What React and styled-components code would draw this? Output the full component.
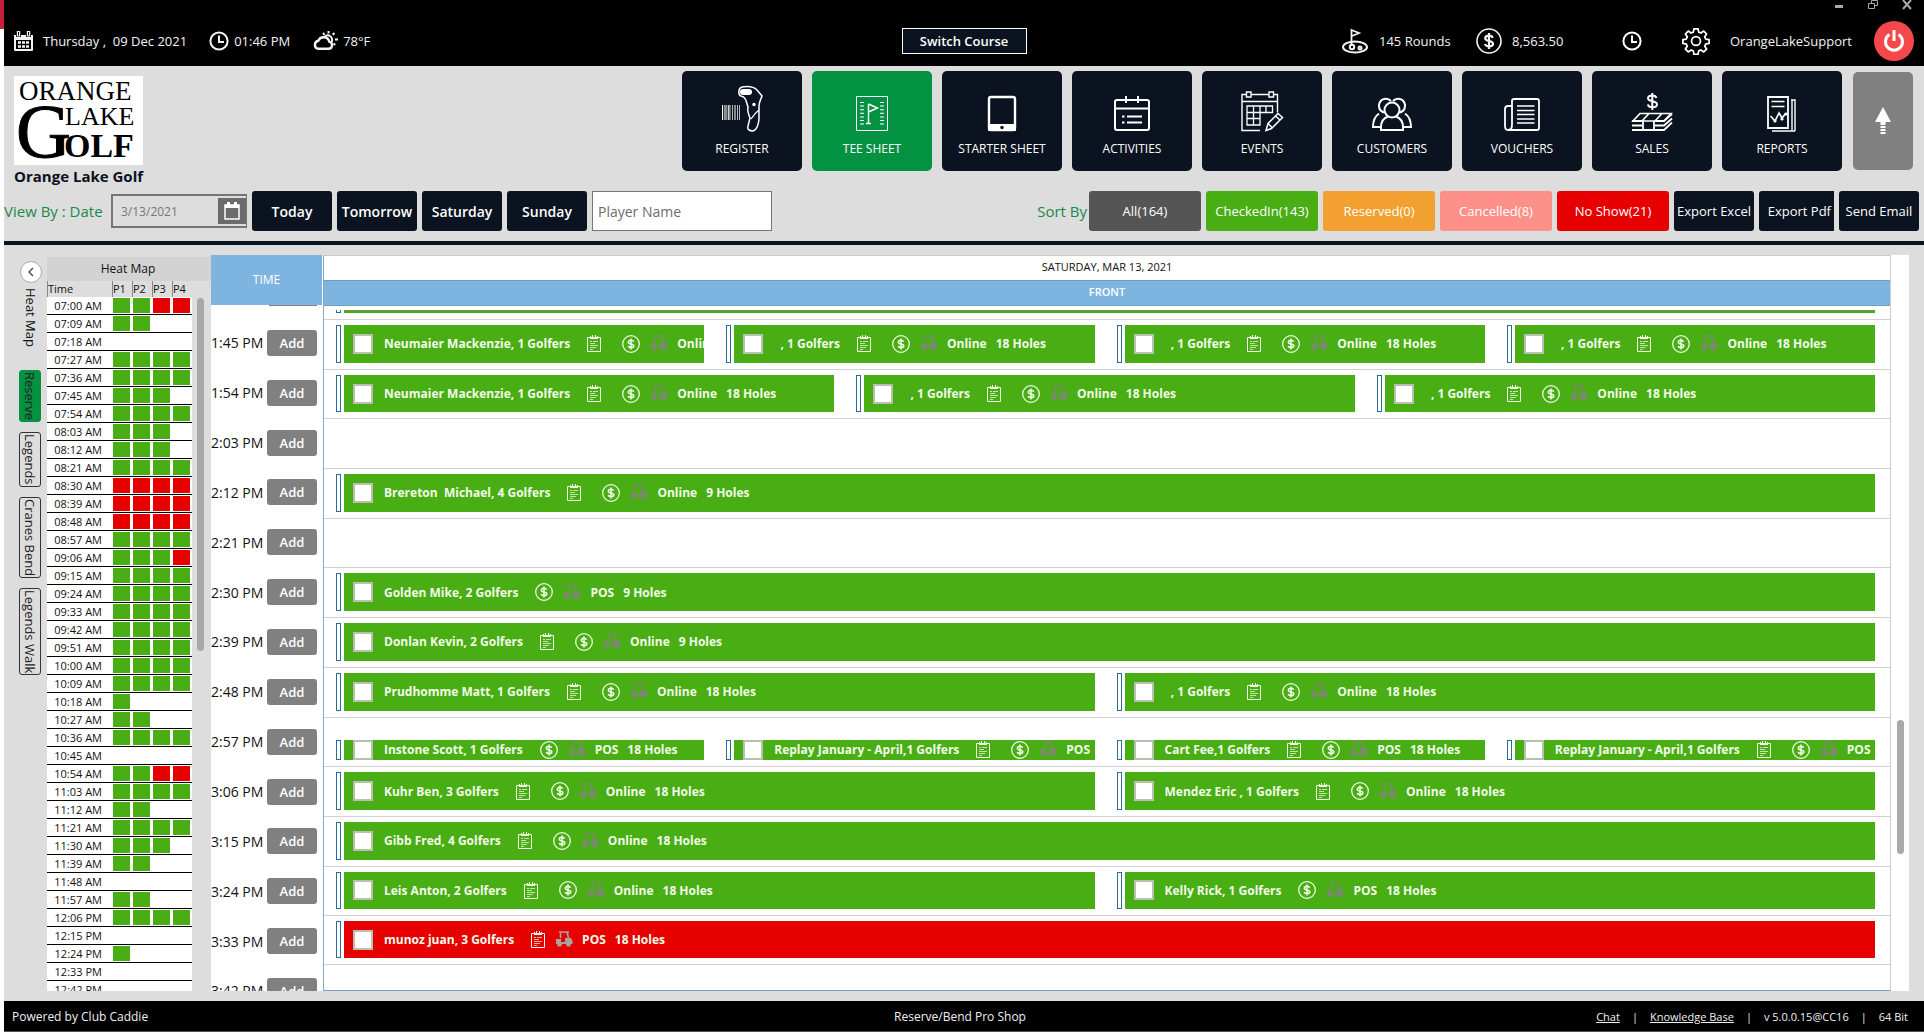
import { useState } from 'react';
import styled, { createGlobalStyle } from 'styled-components';

const GREEN = '#48ae14';
const RED = '#e60000';
const NAVY = '#0b1220';

const stats = [
    { label: 'All(164)', color: '#555555' },
    { label: 'CheckedIn(143)', color: GREEN },
    { label: 'Reserved(0)', color: '#f2a02f' },
    { label: 'Cancelled(8)', color: '#fd9089' },
    { label: 'No Show(21)', color: RED },
];

const courses = ['Reserve', 'Legends', 'Cranes Bend', 'Legends Walk'];

// one letter for each player slot: g = checked in, r = no show
const heat = [
    ['07:00 AM', 'ggrr'], ['07:09 AM', 'gg'], ['07:18 AM', ''], ['07:27 AM', 'gggg'],
    ['07:36 AM', 'gggg'], ['07:45 AM', 'ggg'], ['07:54 AM', 'gggg'], ['08:03 AM', 'ggg'],
    ['08:12 AM', 'ggg'], ['08:21 AM', 'gggg'], ['08:30 AM', 'rrrr'], ['08:39 AM', 'rrrr'],
    ['08:48 AM', 'rrrr'], ['08:57 AM', 'gggg'], ['09:06 AM', 'gggr'], ['09:15 AM', 'gggg'],
    ['09:24 AM', 'gggg'], ['09:33 AM', 'gggg'], ['09:42 AM', 'gggg'], ['09:51 AM', 'gggg'],
    ['10:00 AM', 'gggg'], ['10:09 AM', 'gggg'], ['10:18 AM', 'g'], ['10:27 AM', 'gg'],
    ['10:36 AM', 'gggg'], ['10:45 AM', ''], ['10:54 AM', 'ggrr'], ['11:03 AM', 'gggg'],
    ['11:12 AM', 'gg'], ['11:21 AM', 'gggg'], ['11:30 AM', 'ggg'], ['11:39 AM', 'gg'],
    ['11:48 AM', ''], ['11:57 AM', 'gg'], ['12:06 PM', 'gggg'], ['12:15 PM', ''],
    ['12:24 PM', 'g'], ['12:33 PM', ''], ['12:42 PM', ''],
];

const booking = (name, via, holes, icons = 'nd', color = GREEN) => ({ name, via, holes, icons, color });

const teeTimes = [
    { time: '1:45 PM', list: [
        booking('Neumaier Mackenzie, 1 Golfers', 'Online', 18),
        booking('  , 1 Golfers', 'Online', 18),
        booking('  , 1 Golfers', 'Online', 18),
        booking('  , 1 Golfers', 'Online', 18),
    ] },
    { time: '1:54 PM', list: [
        booking('Neumaier Mackenzie, 1 Golfers', 'Online', 18),
        booking('  , 1 Golfers', 'Online', 18),
        booking('  , 1 Golfers', 'Online', 18),
    ] },
    { time: '2:03 PM', list: [] },
    { time: '2:12 PM', list: [booking('Brereton  Michael, 4 Golfers', 'Online', 9)] },
    { time: '2:21 PM', list: [] },
    { time: '2:30 PM', list: [booking('Golden Mike, 2 Golfers', 'POS', 9, 'd')] },
    { time: '2:39 PM', list: [booking('Donlan Kevin, 2 Golfers', 'Online', 9)] },
    { time: '2:48 PM', list: [
        booking('Prudhomme Matt, 1 Golfers', 'Online', 18),
        booking('  , 1 Golfers', 'Online', 18),
    ] },
    { time: '2:57 PM', short: true, list: [
        booking('Instone Scott, 1 Golfers', 'POS', 18, 'd'),
        booking('Replay January - April,1 Golfers', 'POS', 18),
        booking('Cart Fee,1 Golfers', 'POS', 18),
        booking('Replay January - April,1 Golfers', 'POS', 18),
    ] },
    { time: '3:06 PM', list: [
        booking('Kuhr Ben, 3 Golfers', 'Online', 18),
        booking('Mendez Eric , 1 Golfers', 'Online', 18),
    ] },
    { time: '3:15 PM', list: [booking('Gibb Fred, 4 Golfers', 'Online', 18)] },
    { time: '3:24 PM', list: [
        booking('Leis Anton, 2 Golfers', 'Online', 18),
        booking('Kelly Rick, 1 Golfers', 'POS', 18, 'd'),
    ] },
    { time: '3:33 PM', list: [booking('munoz juan, 3 Golfers', 'POS', 18, 'n', RED)] },
];

/* ---------- icons ---------- */

const Line = styled.svg`
    display: block;
    flex: none;
    fill: none;
    stroke: currentColor;
    stroke-width: ${(p) => p.$w || 2};
`

const CalendarIcon = () => (
    <Line width="19" height="20" viewBox="0 0 19 20">
        <path d="M0 4h19v15q0 1-1 1H1q-1 0-1-1z" fill="currentColor" stroke="none" />
        <path d="M2 9h15v9H2z" fill="#000" stroke="none" />
        <path d="M4.500 0v6M14.500 0v6" stroke="#000" strokeWidth="5" />
        <path d="M4.500 0v5.500M14.500 0v5.500" strokeWidth="3.400" />
        <path d="M4.500 1v3.500M14.500 1v3.500" stroke="#000" strokeWidth="1" />
        <path d="M4 11.500h3M8 11.500h3M12 11.500h3M4 15.500h3M8 15.500h3M12 15.500h3" strokeWidth="2.500" />
    </Line>
)

const ClockIcon = () => (
    <Line width="20" height="20" viewBox="0 0 20 20">
        <circle cx="10" cy="10" r="8.600" />
        <path d="M10 4.500V11h5" />
    </Line>
)

const WeatherIcon = () => (
    <Line width="26" height="20" viewBox="0 0 26 20">
        <path d="M6 17.800h10.500a3.600 3.600 0 0 0 .8-7.100 5.800 5.800 0 0 0-11-.9 4.100 4.100 0 0 0-.3 8z" strokeWidth="2.400" />
        <path d="M12 6.500a4.300 4.300 0 1 1 7.500 4.500" />
        <path d="M16.500 0v2.500M11 2l1.500 1.800M22.500 2l-1.800 1.800M23 8.500h3M21.500 12.500l1.700 1.500" strokeWidth="2" />
    </Line>
)

const HoleIcon = () => (
    <Line width="26" height="26" viewBox="0 0 26 26">
        <ellipse cx="13" cy="19" rx="12" ry="5.500" />
        <path d="M9.500 18V2l7.500 3-7 3" strokeWidth="1.800" />
        <circle cx="10" cy="19" r="2.200" />
        <circle cx="18" cy="20" r="1.500" />
    </Line>
)

const DollarIcon = ({ size }) => (
    <Line width={size} height={size} viewBox="0 0 26 26">
        <circle cx="13" cy="13" r="12" strokeWidth={size < 20 ? 1.800 : 1.600} />
        <path d="M16.800 9.800c-.5-1.500-2-2.200-3.800-2.200-2.200 0-3.800 1-3.800 2.700 0 3.800 7.800 1.600 7.800 5.400 0 1.700-1.700 2.700-4 2.700-2 0-3.500-.9-4-2.400M13 5v16" strokeWidth="2.200" />
    </Line>
)

const GearIcon = () => (
    <Line width="28" height="28" viewBox="0 0 24 24" $w="1.500">
        <circle cx="12" cy="12" r="3.800" />
        <path d="M10.200 1.500h3.600l.5 2.900 1.900.8 2.400-1.700 2.500 2.500-1.600 2.400.8 1.900 2.900.5v3.300l-2.900.5-.8 1.900 1.600 2.400-2.500 2.500-2.400-1.700-1.900.8-.5 2.900h-3.600l-.5-2.900-1.900-.8-2.400 1.700-2.500-2.500 1.600-2.400-.8-1.900-2.900-.5v-3.300l2.900-.5.800-1.900-1.600-2.400 2.500-2.500 2.400 1.700 1.900-.8z" strokeLinejoin="round" />
    </Line>
)

const PowerIcon = () => (
    <Line width="22" height="24" viewBox="0 0 22 24" $w="3">
        <path d="M6.500 5.500a8.500 8.500 0 1 0 9 0M11 1v11" />
    </Line>
)

const NoteIcon = () => (
    <Line width="14" height="17" viewBox="0 0 14 17" $w="1">
        <path d="M.5 2.500h13v14H.5z" />
        <path d="M3.500 1v3M5.500 0v3M8.500 0v3M10.500 1v3M3 3.500h8" />
        <path d="M3 6.500h2M6 6.500h5M3 8.500h5M3 10.500h8M3 12.500h6M3 14.500h3" opacity=".7" />
    </Line>
)

const CartIcon = ({ color }) => (
    <Line width="18" height="17" viewBox="0 0 18 17" color={color} $w="1.600">
        <path d="M4 1h10M5.500 1v6M12 1l1.500 6" />
        <path d="M1 8h5v3h4V7h6l1.500 3v3H1z" fill="currentColor" stroke="none" />
        <circle cx="4.500" cy="13.500" r="2.300" fill="currentColor" stroke="none" />
        <circle cx="13.500" cy="13.500" r="2.300" fill="currentColor" stroke="none" />
    </Line>
)

const navIcons = {
    register: (
        <>
            <path d="M4.500 20v15M8 20v15M17 20v15" strokeWidth="1" />
            <path d="M6.300 20v15M12 20v15M14.500 20v15M19.500 20v15M21.500 20v15" strokeWidth="1" opacity=".7" />
            <path d="M10.500 20v15" strokeWidth="1.600" opacity=".8" />
            <path d="M23 11c-3-1-3-8 1-9 6-1 12 0 15 3l5 6c-1 3-3 6-3 10v12c0 5-2 12-6 13-4 0-6-2-5-5l2-8c-1-4-3-5-2-11-2-6-2-10-7-11z" strokeWidth="1.500" />
            <path d="M41 25c-4 3-6 6-8 9" strokeWidth="1.300" />
            <rect x="22" y="4" width="12" height="6" rx="3" fill="currentColor" stroke="none" />
            <circle cx="36" cy="19.500" r="1.700" fill="currentColor" stroke="none" />
        </>
    ),
    tee: (
        <>
            <path d="M8.500 11.500h31v34h-31z" strokeWidth="1" />
            <path d="M14 17v24M34 17v24" strokeWidth="4" strokeDasharray="1 2.600" />
            <path d="M20.500 38V19M18 38.500h5M20.500 19l9 4-9 4" strokeWidth="1.400" />
        </>
    ),
    tablet: (
        <>
            <rect x="11" y="12" width="26" height="33" rx="2" strokeWidth="2.400" />
            <path d="M11 40h26v5H11z" fill="currentColor" />
            <circle cx="24" cy="42.500" r="1.700" fill={NAVY} stroke="none" />
        </>
    ),
    activities: (
        <>
            <rect x="7" y="15" width="34" height="30" rx="2" />
            <path d="M7 23.500h34" />
            <path d="M18 11v7M30 11v7" />
            <path d="M14 31.500h2.500M14 37.500h2.500M19 31.500h15M19 37.500h15" />
        </>
    ),
    events: (
        <>
            <path d="M8 9.500H4v36h18M13 9.500h18M36 9.500h3.500v18M4 16.500h35.500" strokeWidth="1.400" />
            <path d="M8.500 7h4.500v5H8.500zM31 7h4.500v5H31z" strokeWidth="1.400" />
            <path d="M9 21h25.500v6.500H22V40H9zM9 27.500h13M9 33.500h13M15.500 21v19M22 21v6.500M28 21v6.500" strokeWidth="1.300" />
            <path d="M28 45.500l2-7 10-10 4.500 4-11 11zM30 38.500l4 4M37.500 31l4.500 4" strokeWidth="1.500" />
        </>
    ),
    customers: (
        <>
            <circle cx="24" cy="25" r="7.500" />
            <path d="M16 27.500a7 7 0 1 1 7-11.500M32 27.500a7 7 0 1 0-7-11.500" />
            <path d="M13 45v-3c0-5 3-9 7-10.500M35 45v-3c0-5-3-9-7-10.500M12 45h24" />
            <path d="M13 42H5c0-6 1-10 6-13.500M35 42h8c0-6-1-10-6-13.500" />
        </>
    ),
    vouchers: (
        <>
            <path d="M14 40V16q0-2 2-2h23q2 0 2 2v27q0 2-2 2H10q-3 0-3-4V24q0-3 3-3h4M14 40q0 5-4 5" strokeWidth="1.800" />
            <path d="M19 21h17.500M19 25.500h17.500M19 29.500h17.500M19 34h17.500M19 38h17.500" strokeWidth="1.400" />
        </>
    ),
    sales: (
        <>
            <path d="M28.500 13c-.5-2-2.200-2.600-4.300-2.600-2.600 0-4.200 1-4.200 2.900 0 4 9 2 9 6 0 1.900-1.900 3-4.500 3-2.400 0-4.200-1-4.700-2.800M24.300 8v17" />
            <path d="M5 36l7-7.500h31L36 36zM14 36l7-7.500M27 36l7-7.500" strokeWidth="1.700" />
            <path d="M4 36h11M26 36h10l8-7M4 40.500h10M27 40.500h9l8-7M4 45h32l8-7.500M15 36v8.500M26 36v8.500" strokeWidth="1.800" />
        </>
    ),
    reports: (
        <>
            <path d="M10 12h20v31H10z" strokeWidth="1.800" />
            <path d="M33 15h4v31M14 46h23M34 15v30" strokeWidth="1.400" />
            <path d="M13.500 16.500h13M13.500 21.500h13" strokeWidth="1.600" />
            <path d="M12.500 31l4.500 5 4-8 3 5 4-5" strokeWidth="1.600" />
            <circle cx="17" cy="36" r="1.600" fill="currentColor" stroke="none" />
            <circle cx="24" cy="34" r="1.600" fill="currentColor" stroke="none" />
            <circle cx="28" cy="29" r="1.600" fill="currentColor" stroke="none" />
        </>
    ),
};

const navItems = [
    ['REGISTER', 'register'],
    ['TEE SHEET', 'tee'],
    ['STARTER SHEET', 'tablet'],
    ['ACTIVITIES', 'activities'],
    ['EVENTS', 'events'],
    ['CUSTOMERS', 'customers'],
    ['VOUCHERS', 'vouchers'],
    ['SALES', 'sales'],
    ['REPORTS', 'reports'],
];

function Logo() {
    return (
        <LogoBox viewBox="0 0 129 89" fontFamily="'Liberation Serif', serif" role="img" aria-label="Orange Lake Golf">
            <text x="5" y="24" fontSize="27">ORANGE</text>
            <text x="51" y="49" fontSize="26">LAKE</text>
            <text x="2" y="81" fontSize="76" stroke="#000" strokeWidth="1">G</text>
            <text x="50" y="81" fontSize="34" fontWeight="bold">OLF</text>
        </LogoBox>
    )
}

function TopBar() {
    return (
        <Top>
            <WindowRow>
                <WinButton aria-label="Minimize"><Line width="10" height="10" viewBox="0 0 10 10" $w="3"><path d="M1 6.500h8" /></Line></WinButton>
                <WinButton aria-label="Restore"><Line width="10" height="10" viewBox="0 0 10 10" $w="1"><path d="M.5 3.500h6v5h-6zM3.500 3V.5h6v5H7" /></Line></WinButton>
                <WinButton aria-label="Close"><Line width="10" height="10" viewBox="0 0 10 10" $w="2"><path d="M1 0l8 9M9 0L1 9" /></Line></WinButton>
            </WindowRow>
            <StatusRow>
                <StatusLeft>
                    <Status $gap={10}><CalendarIcon />{'Thursday ,  09 Dec 2021'}</Status>
                    <Status $gap={5}><ClockIcon />01:46 PM</Status>
                    <Status $gap={5}><WeatherIcon />78°F</Status>
                </StatusLeft>
                <SwitchButton>Switch Course</SwitchButton>
                <StatusRight>
                    <Status $gap={11} $width={134}><HoleIcon />145 Rounds</Status>
                    <Status $gap={10} $width={126}><DollarIcon size={26} />8,563.50</Status>
                    <IconButton $width={60} aria-label="Clock in"><ClockIcon /></IconButton>
                    <IconButton $width={68} aria-label="Settings"><GearIcon /></IconButton>
                    <Status $width={144}>OrangeLakeSupport</Status>
                    <PowerButton aria-label="Log out"><PowerIcon /></PowerButton>
                </StatusRight>
            </StatusRow>
        </Top>
    )
}

function Toolbar() {
    const [player, setPlayer] = useState('');
    return (
        <Tools>
            <ToolLabel htmlFor="view-date">View By : Date</ToolLabel>
            <DateBox>
                <DateInput id="view-date" defaultValue="3/13/2021" />
                <DateButton aria-label="Open calendar">
                    <Line width="16" height="18" viewBox="0 0 16 18" $w="1.500">
                        <path d="M1 3h14v14H1z" />
                        <path d="M1 4.500h14" strokeWidth="3" />
                        <path d="M4.500 0v4M11.500 0v4" strokeWidth="3" />
                    </Line>
                </DateButton>
            </DateBox>
            <DayButton>Today</DayButton>
            <DayButton>Tomorrow</DayButton>
            <DayButton>Saturday</DayButton>
            <DayButton>Sunday</DayButton>
            <PlayerInput
                aria-label="Player Name"
                placeholder="Player Name"
                value={player}
                onChange={(e) => setPlayer(e.target.value)}
            />
            <Spacer />
            <SortLabel>Sort By</SortLabel>
            {stats.map((s) => <StatButton key={s.label} $color={s.color}>{s.label}</StatButton>)}
            <ExportButton>Export Excel</ExportButton>
            <ExportButton $cut>Export Pdf</ExportButton>
            <ExportButton>Send Email</ExportButton>
        </Tools>
    )
}

function HeatMap() {
    return (
        <HeatPanel>
            <HeatTitle>Heat Map</HeatTitle>
            <HeatBody>
                <HeatTable>
                    <thead>
                        <tr>
                            <HeatHead $width={65}>Time</HeatHead>
                            {['P1', 'P2', 'P3', 'P4'].map((p) => <HeatHead key={p} $width={20}>{p}</HeatHead>)}
                        </tr>
                    </thead>
                    <tbody>
                        {heat.map(([time, slots]) => (
                            <tr key={time}>
                                <HeatTime>{time}</HeatTime>
                                {[0, 1, 2, 3].map((i) => (
                                    <HeatCell key={i}><Square $kind={slots[i]} /></HeatCell>
                                ))}
                            </tr>
                        ))}
                    </tbody>
                </HeatTable>
                <HeatTrack><Thumb /></HeatTrack>
            </HeatBody>
        </HeatPanel>
    )
}

function Booking({ item }) {
    return (
        <Slot>
            <Handle />
            <Bar $color={item.color}>
                <Check type="checkbox" aria-label={item.name.trim()} />
                <BarName>{item.name}</BarName>
                {item.icons.includes('n') && <NoteIcon />}
                {item.icons.includes('d') && <DollarWrap $after={item.icons.includes('n')}><DollarIcon size={18} /></DollarWrap>}
                <CartWrap><CartIcon color={item.color === RED ? '#a9a39f' : '#798b68'} /></CartWrap>
                <BarText>{item.via}</BarText>
                <BarText>{item.holes} Holes</BarText>
            </Bar>
        </Slot>
    )
}

function TeeSheet() {
    return (
        <Sheet>
            <TimeColumn>
                <TimeHead>TIME</TimeHead>
                <Rows>
                    <TimeRow><AddEdge /></TimeRow>
                    {teeTimes.map((t) => (
                        <TimeRow key={t.time}>
                            <TimeText>{t.time}</TimeText>
                            <AddButton>Add</AddButton>
                        </TimeRow>
                    ))}
                    <LastTimeRow>
                        <TimeText>3:42 PM</TimeText>
                        <AddButton>Add</AddButton>
                    </LastTimeRow>
                </Rows>
            </TimeColumn>
            <Course>
                <DayHead>SATURDAY, MAR 13, 2021</DayHead>
                <FrontHead>FRONT</FrontHead>
                <Rows>
                    <CutRow>
                        <Handle $cut />
                        <CutBar />
                    </CutRow>
                    {teeTimes.map((t) => (
                        <SlotRow key={t.time} $count={t.list.length} $short={t.short}>
                            {t.list.map((b, i) => <Booking key={i} item={b} />)}
                        </SlotRow>
                    ))}
                    <div />
                </Rows>
            </Course>
            <SheetTrack><Thumb /></SheetTrack>
        </Sheet>
    )
}

function App() {
    const [active, setActive] = useState('TEE SHEET');
    const [course, setCourse] = useState('Reserve');

    return (
        <Screen>
            <GlobalStyle />
            <Behind />
            <Window>
                <TopBar />
                <Header>
                    <Brand>
                        <Logo />
                        <BrandName>Orange Lake Golf</BrandName>
                    </Brand>
                    <Nav>
                        {navItems.map(([label, icon]) => (
                            <NavButton key={label} $active={label === active} onClick={() => setActive(label)}>
                                <Line width="48" height="48" viewBox="0 0 48 48">{navIcons[icon]}</Line>
                                <span>{label}</span>
                            </NavButton>
                        ))}
                        <UpButton aria-label="Collapse header">
                            <Line width="16" height="28" viewBox="0 0 16 28">
                                <path d="M8 0l8 15H0z" fill="currentColor" stroke="none" />
                                <path d="M8 14v14" strokeWidth="5" strokeDasharray="4 1 2 1 2 1 2 1" />
                            </Line>
                        </UpButton>
                    </Nav>
                </Header>
                <Toolbar />
                <Main>
                    <Rail>
                        <BackButton aria-label="Hide heat map">
                            <Line width="8" height="10" viewBox="0 0 8 10" $w="1.500"><path d="M6 1L2 5l4 4" /></Line>
                        </BackButton>
                        <RailTitle>Heat Map</RailTitle>
                        {courses.map((c) => (
                            <CourseButton key={c} $active={c === course} onClick={() => setCourse(c)}>{c}</CourseButton>
                        ))}
                    </Rail>
                    <HeatMap />
                    <TeeSheet />
                </Main>
                <Footer>
                    <span>Powered by Club Caddie</span>
                    <span>Reserve/Bend Pro Shop</span>
                    <FootLinks>
                        <FootLink href="#chat">Chat</FootLink>
                        <span>|</span>
                        <FootLink href="#kb">Knowledge Base</FootLink>
                        <span>|</span>
                        <span>v 5.0.0.15@CC16</span>
                        <span>|</span>
                        <span>64 Bit</span>
                    </FootLinks>
                </Footer>
            </Window>
        </Screen>
    )
}

/* ---------- styles ---------- */

const GlobalStyle = createGlobalStyle`
    * {
        box-sizing: border-box;
    }
    body {
        margin: 0;
        overflow: hidden;
        font-family: 'Open Sans', 'Noto Sans', sans-serif;
        font-size: 13px;
        color: #111;
    }
    button, input {
        font-family: inherit;
        margin: 0;
        padding: 0;
        border: none;
    }
`
const Screen = styled.div`
    display: flex;
    height: 100vh;
`
const Behind = styled.div`
    width: 4px;
    flex: none;
    background: linear-gradient(#c3203a 29px, #fff 29px);
`
const Window = styled.div`
    flex: 1;
    min-width: 0;
    display: flex;
    flex-direction: column;
    background: #dcdddc;
    border-bottom: 1px solid #555;
`
const Top = styled.header`
    flex: none;
    background: #000;
    color: #f4f4f4;
`
const WindowRow = styled.div`
    display: flex;
    justify-content: flex-end;
    gap: 24px;
    height: 18px;
    padding-right: 12px;
`
const WinButton = styled.button`
    display: flex;
    height: 10px;
    background: none;
    color: #aaa;
`
const StatusRow = styled.div`
    display: grid;
    grid-template-columns: 1fr auto 1fr;
    align-items: center;
    height: 48px;
    padding: 0 10px 2px;
`
const StatusLeft = styled.div`
    display: flex;
    gap: 22px;
`
const StatusRight = styled.div`
    display: flex;
    align-items: center;
    justify-content: flex-end;
`
const Status = styled.div`
    display: flex;
    align-items: center;
    gap: ${(p) => p.$gap || 0}px;
    width: ${(p) => (p.$width ? p.$width + 'px' : 'auto')};
    font-size: 13px;
    white-space: pre;
`
const SwitchButton = styled.button`
    width: 125px;
    height: 26px;
    border: 1px solid #fff;
    background: ${NAVY};
    color: #fff;
    font-size: 13px;
    font-weight: 600;
`
const IconButton = styled.button`
    display: flex;
    justify-content: center;
    align-items: center;
    width: ${(p) => p.$width}px;
    height: 46px;
    background: none;
    color: #fff;
`
const PowerButton = styled.button`
    display: flex;
    justify-content: center;
    align-items: center;
    width: 40px;
    height: 40px;
    border-radius: 50%;
    background: #f4484a;
    color: #fff;
`
const Header = styled.div`
    flex: none;
    display: flex;
    justify-content: space-between;
    height: 125px;
    padding: 0 11px 0 10px;
`
const Brand = styled.div`
    padding-top: 10px;
`
const LogoBox = styled.svg`
    display: block;
    width: 129px;
    height: 89px;
    background: #fff;
`
const BrandName = styled.div`
    font-size: 15px;
    line-height: 22px;
    font-weight: 700;
    color: ${NAVY};
    white-space: nowrap;
`
const Nav = styled.nav`
    display: flex;
    gap: 10px;
    padding-top: 5px;
`
const NavButton = styled.button`
    display: flex;
    flex-direction: column;
    align-items: center;
    gap: 7px;
    width: 120px;
    height: 100px;
    padding-top: 14px;
    border-radius: 5px;
    background: ${(p) => (p.$active ? '#039142' : NAVY)};
    color: #fff;
    font-size: 12px;
    line-height: 18px;
`
const UpButton = styled.button`
    display: flex;
    align-items: center;
    justify-content: center;
    width: 60px;
    height: 98px;
    margin: 1px 0 0 1px;
    border-radius: 5px;
    background: #808080;
    color: #fff;
`
const Tools = styled.div`
    flex: none;
    display: flex;
    align-items: center;
    gap: 5px;
    height: 54px;
    padding: 0 5px 10px 0;
    border-bottom: 4px solid #0b151d;
`
const ToolLabel = styled.label`
    width: 102px;
    font-size: 15px;
    color: #1b8a49;
    white-space: nowrap;
`
const DateBox = styled.div`
    display: flex;
    align-items: center;
    width: 136px;
    height: 34px;
    border: 2px solid #757575;
    border-right-width: 1px;
`
const DateInput = styled.input`
    flex: 1;
    min-width: 0;
    padding-left: 8px;
    background: none;
    font-size: 12px;
    color: #777;
`
const DateButton = styled.button`
    display: flex;
    align-items: center;
    justify-content: center;
    width: 28px;
    height: 26px;
    background: #6b6b6b;
    color: #fff;
`
const DayButton = styled.button`
    width: 80px;
    height: 40px;
    border-radius: 3px;
    background: ${NAVY};
    color: #fff;
    font-size: 14px;
    font-weight: 600;
`
const PlayerInput = styled.input`
    width: 180px;
    height: 40px;
    padding: 0 5px;
    border: 1px solid #777;
    background: #fff;
    font-size: 14px;
    &::placeholder {
        color: #6d6d6d;
    }
`
const Spacer = styled.div`
    flex: 1;
`
const SortLabel = styled.span`
    margin-right: -3px;
    font-size: 15px;
    color: #1b8a49;
`
const StatButton = styled.button`
    width: 112px;
    height: 40px;
    border-radius: 3px;
    background: ${(p) => p.$color};
    color: #fff;
    font-size: 13px;
`
const ExportButton = styled.button`
    width: ${(p) => (p.$cut ? 75 : 80)}px;
    height: 40px;
    padding-right: ${(p) => (p.$cut ? 3 : 0)}px;
    border-radius: ${(p) => (p.$cut ? '3px 0 0 3px' : '3px')};
    background: ${NAVY};
    color: #fff;
    font-size: 13px;
    text-align: ${(p) => (p.$cut ? 'right' : 'center')};
    white-space: nowrap;
`
const Main = styled.main`
    flex: 1;
    min-height: 0;
    display: flex;
    padding: 10px 15px 10px 0;
`
const Rail = styled.div`
    flex: none;
    display: flex;
    flex-direction: column;
    align-items: center;
    width: 43px;
    padding: 6px 1px 0 10px;
`
const BackButton = styled.button`
    display: flex;
    align-items: center;
    justify-content: center;
    width: 22px;
    height: 22px;
    margin-left: 2px;
    border: 1px solid #aaa;
    border-radius: 50%;
    background: #fff;
    color: #555;
`
const RailTitle = styled.div`
    writing-mode: vertical-rl;
    height: 82px;
    padding-top: 5px;
    margin: 0 0 5px 2px;
    font-size: 13px;
    line-height: 20px;
`
const CourseButton = styled.button`
    writing-mode: vertical-rl;
    width: 22px;
    margin-bottom: 10px;
    padding: 1px 0;
    border: 1px solid ${(p) => (p.$active ? '#039142' : '#333')};
    border-radius: 3px;
    background: ${(p) => (p.$active ? '#039142' : 'none')};
    color: #222;
    font-size: 13px;
    line-height: 20px;
    white-space: nowrap;
`
const HeatPanel = styled.section`
    flex: none;
    display: flex;
    flex-direction: column;
    width: 164px;
    padding-top: 2px;
`
const HeatTitle = styled.div`
    height: 24px;
    padding-right: 2px;
    background: #d2d3d2;
    font-size: 12px;
    line-height: 24px;
    text-align: center;
`
const HeatBody = styled.div`
    flex: 1;
    min-height: 0;
    display: flex;
    overflow: hidden;
`
const HeatTable = styled.table`
    width: 145px;
    table-layout: fixed;
    border-spacing: 0;
    align-self: flex-start;
`
const HeatHead = styled.th`
    width: ${(p) => p.$width}px;
    height: 16px;
    padding: 0;
    border-left: 1px solid #888;
    font-size: 11px;
    line-height: 16px;
    font-weight: 400;
    text-align: left;
`
const HeatTime = styled.td`
    padding: 1px 10px 1px 0;
    border-bottom: 1px solid #000;
    background: #fff;
    font-size: 11px;
    line-height: 15px;
    text-align: right;
    white-space: nowrap;
`
const HeatCell = styled.td`
    padding: 1px 2px 1px 1px;
    border-bottom: 1px solid #000;
    background: #fff;
`
const Square = styled.div`
    height: 15px;
    background: ${(p) => (p.$kind === 'g' ? GREEN : p.$kind === 'r' ? RED : '#fff')};
`
const HeatTrack = styled.div`
    display: grid;
    grid-template-rows: 17fr 352fr 339fr;
    width: 7px;
    margin-left: 5px;
`
const Thumb = styled.div`
    grid-row: 2;
    border-radius: 4px;
    background: #a9a9a9;
`
const Sheet = styled.section`
    flex: 1;
    min-width: 0;
    display: flex;
    background: #fff;
`
const TimeColumn = styled.div`
    flex: none;
    display: flex;
    flex-direction: column;
    width: 112px;
    padding-right: 1px;
`
const TimeHead = styled.div`
    flex: none;
    height: 50px;
    background: #7eb4e0;
    color: #fff;
    font-size: 12px;
    line-height: 50px;
    text-align: center;
`
const Rows = styled.div`
    flex: 1;
    min-height: 0;
    display: grid;
    grid-template-rows: 13px repeat(13, minmax(0, 1fr)) 25px;
    overflow: hidden;
`
const TimeRow = styled.div`
    display: flex;
    align-items: center;
    justify-content: space-between;
    padding-right: 5px;
`
const LastTimeRow = styled(TimeRow)`
    height: 50px;
`
const TimeText = styled.span`
    font-size: 14px;
    white-space: nowrap;
`
const AddButton = styled.button`
    width: 50px;
    height: 26px;
    border-radius: 3px;
    background: #808080;
    color: #fff;
    font-size: 13px;
    font-weight: 600;
`
const AddEdge = styled.div`
    align-self: flex-start;
    width: 48px;
    height: 1px;
    margin-left: auto;
    background: #808080;
`
const Course = styled.div`
    flex: 1;
    min-width: 0;
    display: flex;
    flex-direction: column;
    border: 1px solid #c9ccd0;
    border-left-color: #7fa9c6;
    border-bottom-color: #7a9fc0;
`
const DayHead = styled.div`
    flex: none;
    height: 24px;
    font-size: 11px;
    line-height: 22px;
    text-align: center;
`
const FrontHead = styled.div`
    flex: none;
    height: 26px;
    border: solid #6c9fc4;
    border-width: 1px 0;
    background: #7eb4e0;
    color: #fff;
    font-size: 11px;
    font-weight: 600;
    line-height: 22px;
    text-align: center;
`
const SlotRow = styled.div`
    display: grid;
    grid-template-columns: repeat(${(p) => p.$count || 1}, minmax(0, 1fr));
    column-gap: 22px;
    padding: ${(p) => (p.$short ? 22 : 5)}px 15px 6px 12px;
    border-top: 1px solid #cfd3d4;
    &:nth-last-child(2) {
        border-bottom: 1px solid #cfd3d4;
    }
`
const CutRow = styled.div`
    display: flex;
    gap: 3px;
    padding: 4px 15px 6px 12px;
`
const CutBar = styled.div`
    flex: 1;
    background: #55a52c;
`
const Slot = styled.div`
    display: flex;
    gap: 3px;
    min-width: 0;
`
const Handle = styled.div`
    flex: none;
    width: 5px;
    border: 1px solid #2b6c99;
    border-top-width: ${(p) => (p.$cut ? 0 : 1)}px;
    background: #fff;
`
const Bar = styled.div`
    flex: 1;
    min-width: 0;
    display: flex;
    align-items: center;
    overflow: hidden;
    padding-left: 9px;
    background: ${(p) => p.$color};
    color: #f3fbe9;
    font-size: 12px;
    font-weight: 700;
    white-space: pre;
`
const Check = styled.input`
    appearance: none;
    flex: none;
    width: 20px;
    height: 20px;
    border: 2px solid #b9c0b2;
    background: #fff;
`
const BarName = styled.span`
    margin: 0 17px 0 11px;
`
const DollarWrap = styled.span`
    margin-left: ${(p) => (p.$after ? 21 : 0)}px;
`
const CartWrap = styled.span`
    margin-left: 10px;
`
const BarText = styled.span`
    margin-left: 9px;
`
const SheetTrack = styled.div`
    flex: none;
    display: grid;
    grid-template-rows: 464fr 134fr 137fr;
    width: 18px;
    padding: 0 5px 0 6px;
`
const Footer = styled.footer`
    flex: none;
    display: grid;
    grid-template-columns: 1fr auto 1fr;
    align-items: center;
    height: 30px;
    padding: 0 16px 0 8px;
    background: #000;
    color: #f0f0f0;
    font-size: 12px;
`
const FootLinks = styled.div`
    display: flex;
    justify-content: flex-end;
    gap: 12px;
    font-size: 11px;
`
const FootLink = styled.a`
    color: inherit;
`

export default App
